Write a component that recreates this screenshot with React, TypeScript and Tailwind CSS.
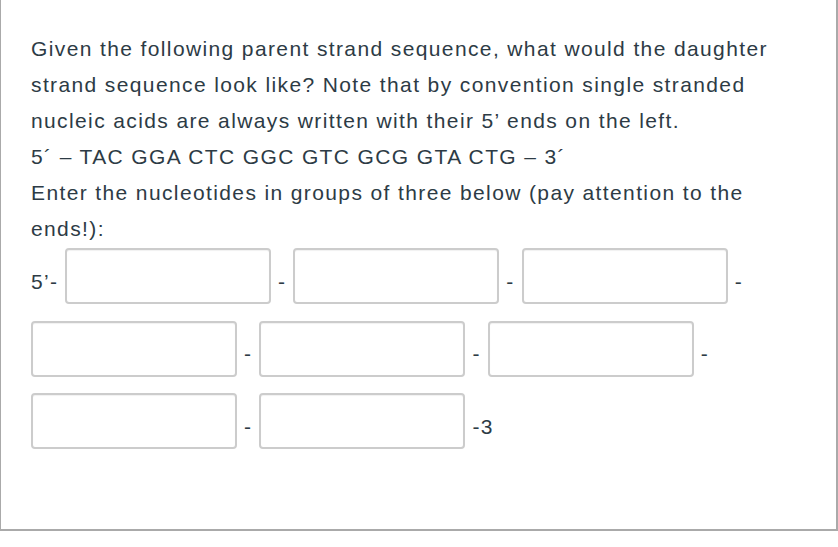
import React from "react";

const Box = () => (
  <div className="w-[206px] h-[56px] shrink-0 rounded-[4px] border-2 border-[#cccccc] bg-white shadow-[inset_0_1px_1px_rgba(0,0,0,0.06)]" />
);

const Dash = ({ text = "-" }: { text?: string }) => (
  <span className="mx-[7px] pt-[11.5px] leading-[36px]">{text}</span>
);

export default function App() {
  return (
    <div
      className="w-[838px] h-[547px] bg-white text-[#2d3b45]"
      style={{ fontFamily: '"Liberation Sans", Arial, sans-serif' }}
    >
      <div className="w-[838px] h-[531px] border-l border-r-2 border-b-2 border-[#aaaaaa] pt-[31px] pl-[30px] text-[21px] leading-[36px] tracking-[1.38px]">
        <p className="w-[770px]">
          Given the following parent strand sequence, what would the daughter strand sequence look like? Note that by convention single stranded nucleic acids are always written with their 5’ ends on the left.
          <br />
          5´ – TAC GGA CTC GGC GTC GCG GTA CTG – 3´
          <br />
          Enter the nucleotides in groups of three below (pay attention to the ends!):
        </p>
        <div className="mt-[1px] flex flex-col gap-y-[16.5px]">
          <div className="flex items-center h-[56px]">
            <span className="mr-[6.5px] pt-[11.5px] leading-[36px]">5’-</span>
            <Box />
            <Dash />
            <Box />
            <Dash />
            <Box />
            <Dash />
          </div>
          <div className="flex items-center h-[56px]">
            <Box />
            <Dash />
            <Box />
            <Dash />
            <Box />
            <Dash />
          </div>
          <div className="flex items-center h-[56px]">
            <Box />
            <Dash />
            <Box />
            <Dash text="-3" />
          </div>
        </div>
      </div>
    </div>
  );
}
